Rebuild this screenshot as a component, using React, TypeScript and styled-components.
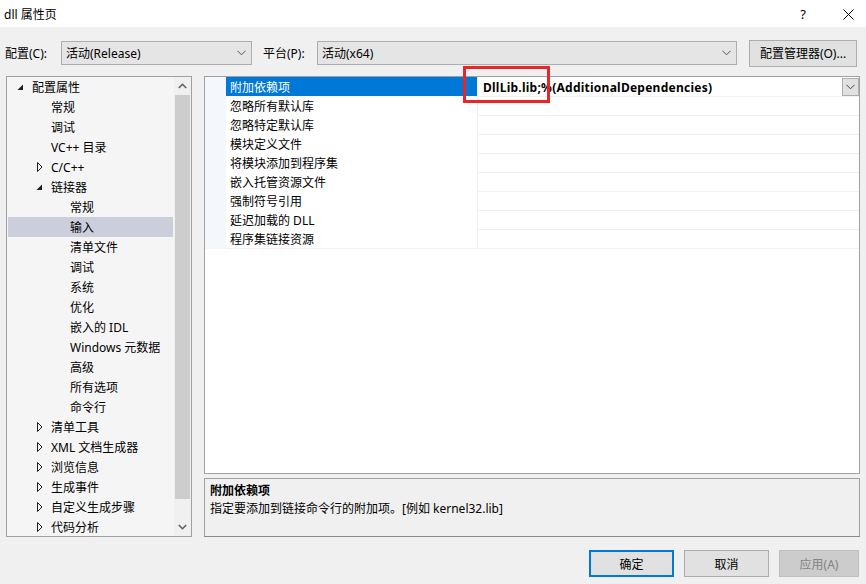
import React from "react";
import styled, { createGlobalStyle } from "styled-components";

const Global = createGlobalStyle`
  html, body { margin: 0; padding: 0; background: #f0f0f0; }
  body {
    font-family: "Noto Sans", "Noto Sans CJK SC", sans-serif;
    font-size: 12px;
    color: #000;
  }
  * { box-sizing: border-box; }
`;

const Window = styled.div`
  width: 866px;
  height: 584px;
  background: #f0f0f0;
  display: flex;
  flex-direction: column;
  overflow: hidden;
`;

const TitleBar = styled.div`
  height: 27px;
  background: #fff;
  display: flex;
  align-items: center;
  padding-left: 4px;
  flex-shrink: 0;
`;

const Title = styled.div`
  flex: 1;
  line-height: 16px;
  margin-top: 2px;
`;

const CaptionButton = styled.div<{ $w: number }>`
  width: ${(p) => p.$w}px;
  height: 27px;
  display: flex;
  align-items: center;
  justify-content: center;
  font-size: 13px;
  padding-top: 1px;
`;

const ConfigRow = styled.div`
  margin-top: 14px;
  height: 24px;
  display: flex;
  align-items: center;
  padding-left: 5px;
  flex-shrink: 0;
`;

const FieldLabel = styled.div<{ $w: number; $ml?: number }>`
  width: ${(p) => p.$w}px;
  margin-left: ${(p) => p.$ml ?? 0}px;
  white-space: nowrap;
`;

const Combo = styled.div<{ $w: number }>`
  width: ${(p) => p.$w}px;
  height: 24px;
  border: 1px solid #adadad;
  background: #e5e5e5;
  display: flex;
  align-items: center;
  padding: 0 5px 0 4px;
`;

const ComboText = styled.div`
  flex: 1;
  white-space: nowrap;
`;

const ManagerButton = styled.div`
  margin-left: 12px;
  width: 108px;
  height: 27px;
  border: 1px solid #adadad;
  background: #e1e1e1;
  display: flex;
  align-items: center;
  justify-content: center;
  white-space: nowrap;
`;

const Main = styled.div`
  margin-top: 11px;
  height: 461px;
  display: flex;
  gap: 12px;
  padding-left: 6px;
  flex-shrink: 0;
`;

const TreePanel = styled.div`
  width: 186px;
  border: 1px solid #a0a0a0;
  background: #f5f5f5;
  display: flex;
`;

const TreeList = styled.div`
  flex: 1;
  display: flex;
  flex-direction: column;
`;

const TreeRow = styled.div<{ $level: number; $selected?: boolean }>`
  height: 20px;
  margin: 0 1px 0 1px;
  display: flex;
  align-items: center;
  padding-left: ${(p) => p.$level * 19 + 9}px;
  background: ${(p) => (p.$selected ? "#cccedb" : "transparent")};
  white-space: nowrap;
`;

const ArrowBox = styled.div`
  width: 15px;
  height: 20px;
  display: flex;
  align-items: center;
`;

const Scrollbar = styled.div`
  width: 17px;
  background: #f0f0f0;
  display: flex;
  flex-direction: column;
  align-items: center;
`;

const ScrollArrow = styled.div`
  width: 17px;
  height: 18px;
  display: flex;
  align-items: center;
  justify-content: center;
  flex-shrink: 0;
`;

const ScrollThumb = styled.div`
  width: 15px;
  height: 404px;
  background: #cdcdcd;
`;

const ScrollTrack = styled.div`
  flex: 1;
`;

const RightColumn = styled.div`
  width: 656px;
  display: flex;
  flex-direction: column;
  gap: 4px;
`;

const GridBox = styled.div`
  position: relative;
  height: 398px;
  border: 1px solid #a0a0a0;
  background: #fff;
`;

const PropRow = styled.div`
  display: grid;
  grid-template-columns: 21px 252px 1fr;
  height: 19px;
`;

const Gutter = styled.div`
  background: #f4f7fc;
`;

const NameCell = styled.div<{ $selected?: boolean }>`
  border-bottom: 1px solid #f0f0f0;
  border-right: 1px solid #f0f0f0;
  padding: 1px 0 0 4px;
  display: flex;
  align-items: center;
  white-space: nowrap;
  background: ${(p) => (p.$selected ? "#0078d7" : "#fff")};
  color: ${(p) => (p.$selected ? "#fff" : "#000")};
`;

const ValueCell = styled.div`
  border-bottom: 1px solid #f0f0f0;
  padding: 1px 0 0 5px;
  display: flex;
  align-items: center;
  white-space: nowrap;
`;

const ValueText = styled.div`
  flex: 1;
  font-weight: 700;
  letter-spacing: 0.25px;
`;

const DropButton = styled.div`
  width: 17px;
  height: 18px;
  align-self: flex-start;
  border: 1px solid #adadad;
  background: #e1e1e1;
  display: flex;
  align-items: center;
  justify-content: center;
`;

const Highlight = styled.div`
  position: absolute;
  left: 258px;
  top: -11px;
  width: 87px;
  height: 37px;
  border: 3px solid #e8262a;
  pointer-events: none;
`;

const DescPanel = styled.div`
  height: 59px;
  border: 1px solid #a0a0a0;
  border-bottom-color: #8a8a8a;
  background: #f0f0f0;
  padding: 3px 0 0 5px;
  display: flex;
  flex-direction: column;
`;

const DescTitle = styled.div`
  font-weight: 700;
  line-height: 18px;
`;

const DescText = styled.div`
  line-height: 18px;
`;

const ButtonRow = styled.div`
  margin-top: 13px;
  display: flex;
  justify-content: flex-end;
  gap: 10px;
  padding-right: 7px;
`;

const DialogButton = styled.div<{ $variant?: "default" | "normal" | "disabled"; $w: number }>`
  width: ${(p) => p.$w}px;
  height: 27px;
  display: flex;
  align-items: center;
  justify-content: center;
  background: ${(p) => (p.$variant === "disabled" ? "#cccccc" : "#e1e1e1")};
  color: ${(p) => (p.$variant === "disabled" ? "#838383" : "#000")};
  border: ${(p) =>
    p.$variant === "default"
      ? "2px solid #0078d7"
      : p.$variant === "disabled"
      ? "1px solid #bfbfbf"
      : "1px solid #adadad"};
`;

const Chevron = ({ color = "#333" }: { color?: string }) => (
  <svg width="9" height="6" viewBox="0 0 9 6">
    <polyline points="0.5,0.8 4.5,4.8 8.5,0.8" fill="none" stroke={color} strokeWidth="1" />
  </svg>
);

const ChevronUp = () => (
  <svg width="9" height="6" viewBox="0 0 9 6">
    <polyline points="0.8,5 4.5,1.3 8.2,5" fill="none" stroke="#606060" strokeWidth="1.6" />
  </svg>
);

const ChevronDown = () => (
  <svg width="9" height="6" viewBox="0 0 9 6">
    <polyline points="0.8,1 4.5,4.7 8.2,1" fill="none" stroke="#606060" strokeWidth="1.6" />
  </svg>
);

const Expanded = () => (
  <svg width="7" height="7" viewBox="0 0 7 7">
    <polygon points="6,0.5 6,6 0.5,6" fill="#1e1e1e" />
  </svg>
);

const Collapsed = () => (
  <svg width="7" height="10" viewBox="0 0 7 10" style={{ marginLeft: 1 }}>
    <polygon points="0.5,0.5 5,5 0.5,9.5" fill="none" stroke="#1e1e1e" strokeWidth="1" />
  </svg>
);

type TreeItem = { label: string; level: number; arrow?: "open" | "closed"; selected?: boolean };

const tree: TreeItem[] = [
  { label: "配置属性", level: 0, arrow: "open" },
  { label: "常规", level: 1 },
  { label: "调试", level: 1 },
  { label: "VC++ 目录", level: 1 },
  { label: "C/C++", level: 1, arrow: "closed" },
  { label: "链接器", level: 1, arrow: "open" },
  { label: "常规", level: 2 },
  { label: "输入", level: 2, selected: true },
  { label: "清单文件", level: 2 },
  { label: "调试", level: 2 },
  { label: "系统", level: 2 },
  { label: "优化", level: 2 },
  { label: "嵌入的 IDL", level: 2 },
  { label: "Windows 元数据", level: 2 },
  { label: "高级", level: 2 },
  { label: "所有选项", level: 2 },
  { label: "命令行", level: 2 },
  { label: "清单工具", level: 1, arrow: "closed" },
  { label: "XML 文档生成器", level: 1, arrow: "closed" },
  { label: "浏览信息", level: 1, arrow: "closed" },
  { label: "生成事件", level: 1, arrow: "closed" },
  { label: "自定义生成步骤", level: 1, arrow: "closed" },
  { label: "代码分析", level: 1, arrow: "closed" },
];

const props = [
  "附加依赖项",
  "忽略所有默认库",
  "忽略特定默认库",
  "模块定义文件",
  "将模块添加到程序集",
  "嵌入托管资源文件",
  "强制符号引用",
  "延迟加载的 DLL",
  "程序集链接资源",
];

export default function App() {
  return (
    <Window>
      <Global />
      <TitleBar>
        <Title>dll 属性页</Title>
        <CaptionButton $w={54}>?</CaptionButton>
        <CaptionButton $w={36}>
          <svg width="11" height="11" viewBox="0 0 11 11">
            <line x1="0.5" y1="0.5" x2="10.5" y2="10.5" stroke="#000" strokeWidth="1" />
            <line x1="10.5" y1="0.5" x2="0.5" y2="10.5" stroke="#000" strokeWidth="1" />
          </svg>
        </CaptionButton>
      </TitleBar>

      <ConfigRow>
        <FieldLabel $w={56}>配置(C):</FieldLabel>
        <Combo $w={191}>
          <ComboText>活动(Release)</ComboText>
          <Chevron color="#555" />
        </Combo>
        <FieldLabel $w={54} $ml={11}>平台(P):</FieldLabel>
        <Combo $w={420}>
          <ComboText>活动(x64)</ComboText>
          <Chevron color="#555" />
        </Combo>
        <ManagerButton>配置管理器(O)...</ManagerButton>
      </ConfigRow>

      <Main>
        <TreePanel>
          <TreeList>
            {tree.map((t, i) => (
              <TreeRow key={i} $level={t.level} $selected={t.selected}>
                <ArrowBox>
                  {t.arrow === "open" && <Expanded />}
                  {t.arrow === "closed" && <Collapsed />}
                </ArrowBox>
                {t.label}
              </TreeRow>
            ))}
          </TreeList>
          <Scrollbar>
            <ScrollArrow>
              <ChevronUp />
            </ScrollArrow>
            <ScrollThumb />
            <ScrollTrack />
            <ScrollArrow>
              <ChevronDown />
            </ScrollArrow>
          </Scrollbar>
        </TreePanel>

        <RightColumn>
          <GridBox>
            {props.map((p, i) => (
              <PropRow key={i}>
                <Gutter />
                <NameCell $selected={i === 0}>{p}</NameCell>
                <ValueCell>
                  {i === 0 && (
                    <>
                      <ValueText>DllLib.lib;%(AdditionalDependencies)</ValueText>
                      <DropButton>
                        <Chevron color="#444" />
                      </DropButton>
                    </>
                  )}
                </ValueCell>
              </PropRow>
            ))}
            <Highlight />
          </GridBox>
          <DescPanel>
            <DescTitle>附加依赖项</DescTitle>
            <DescText>指定要添加到链接命令行的附加项。[例如 kernel32.lib]</DescText>
          </DescPanel>
        </RightColumn>
      </Main>

      <ButtonRow>
        <DialogButton $variant="default" $w={85}>确定</DialogButton>
        <DialogButton $variant="normal" $w={85}>取消</DialogButton>
        <DialogButton $variant="disabled" $w={80}>应用(A)</DialogButton>
      </ButtonRow>
    </Window>
  );
}
